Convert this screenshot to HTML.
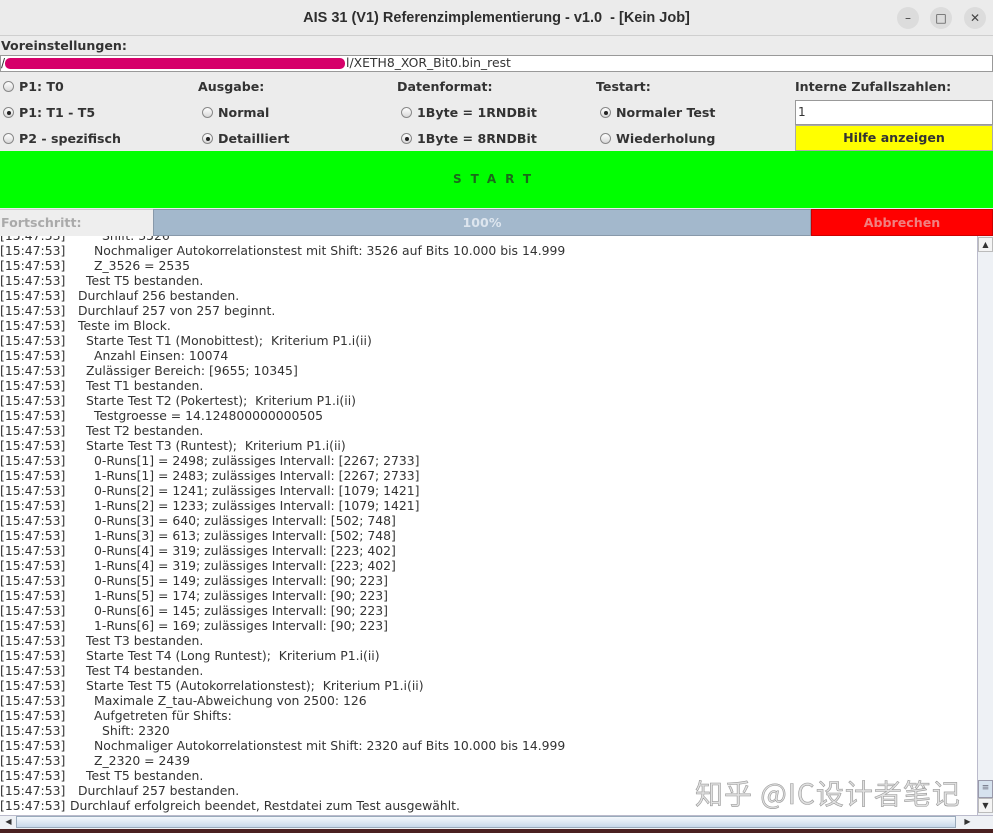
<!DOCTYPE html>
<html><head><meta charset="utf-8"><style>
*{margin:0;padding:0;box-sizing:border-box}
body{width:993px;height:833px;overflow:hidden;background:#ececec;font-family:"DejaVu Sans","Liberation Sans",sans-serif;position:relative;font-size:13px;color:#333}
.a{position:absolute}
.title{left:0;top:0;width:993px;height:36px;background:#ebebeb;border-bottom:1px solid #cfcfcf;text-align:center;line-height:36px;font-family:"Liberation Sans",sans-serif;font-weight:bold;font-size:14.5px;color:#2e2e2e}
.wb{width:22px;height:22px;border-radius:50%;background:#dcdcdc;top:7px;font-size:12px;text-align:center;line-height:22px;color:#444;font-family:"DejaVu Sans",sans-serif}
.r{display:inline-block;width:11px;height:11px;border:1px solid #888;border-radius:50%;background:linear-gradient(#fff,#d8d8d8);vertical-align:-1px;margin-right:5px;position:relative}
.r.on::after{content:"";position:absolute;left:2.5px;top:2.5px;width:4px;height:4px;border-radius:50%;background:#222}
.lbl{font-weight:bold;font-size:12.6px;color:#333;white-space:nowrap}
#log{left:0;top:236px;width:977px;height:579px;background:#fff;overflow:hidden}
#log div{position:absolute;height:15px;line-height:15px;font-size:12.4px;color:#333;white-space:pre}
</style></head><body>
<div class="a title">AIS 31 (V1) Referenzimplementierung - v1.0 &nbsp;- [Kein Job]</div>
<div class="a wb" style="left:897px">–</div>
<div class="a wb" style="left:930px">□</div>
<div class="a wb" style="left:964px">✕</div>

<div class="a lbl" style="left:1px;top:38px">Voreinstellungen:</div>
<div class="a" style="left:0;top:55px;width:993px;height:17px;background:#fff;border:1px solid #999"></div>
<div class="a" style="left:5px;top:58px;width:340px;height:11px;background:#d6006a;border-radius:5px"></div>
<div class="a" style="left:346px;top:56px;font-size:12.4px;line-height:14px;color:#333">l/XETH8_XOR_Bit0.bin_rest</div>
<div class="a" style="left:1px;top:56px;font-size:12px;line-height:14px;color:#333">/</div>

<div class="a lbl" style="left:3px;top:79px"><span class="r"></span>P1: T0</div>
<div class="a lbl" style="left:3px;top:105px"><span class="r on"></span>P1: T1 - T5</div>
<div class="a lbl" style="left:3px;top:131px"><span class="r"></span>P2 - spezifisch</div>
<div class="a lbl" style="left:198px;top:79px">Ausgabe:</div>
<div class="a lbl" style="left:202px;top:105px"><span class="r"></span>Normal</div>
<div class="a lbl" style="left:202px;top:131px"><span class="r on"></span>Detailliert</div>
<div class="a lbl" style="left:397px;top:79px">Datenformat:</div>
<div class="a lbl" style="left:401px;top:105px"><span class="r"></span>1Byte = 1RNDBit</div>
<div class="a lbl" style="left:401px;top:131px"><span class="r on"></span>1Byte = 8RNDBit</div>
<div class="a lbl" style="left:596px;top:79px">Testart:</div>
<div class="a lbl" style="left:600px;top:105px"><span class="r on"></span>Normaler Test</div>
<div class="a lbl" style="left:600px;top:131px"><span class="r"></span>Wiederholung</div>
<div class="a lbl" style="left:795px;top:79px">Interne Zufallszahlen:</div>
<div class="a" style="left:795px;top:100px;width:198px;height:25px;background:#fff;border:1px solid #999;font-size:12px;line-height:22px;padding-left:2px">1</div>
<div class="a lbl" style="left:795px;top:125px;width:198px;height:26px;background:#ffff00;border:1px solid #aaa;text-align:center;line-height:24px">Hilfe anzeigen</div>

<div class="a" style="left:0;top:151px;width:993px;height:57px;background:#00ff00;text-align:center;line-height:57px;font-weight:bold;font-size:12px;letter-spacing:9px;color:#1a6a1a">START</div>

<div class="a" style="left:0;top:209px;width:153px;height:27px;background:#eee;border-top:1px solid #ccc;font-weight:bold;color:#aaa;line-height:26px;font-size:12.6px;padding-left:1px">Fortschritt:</div>
<div class="a" style="left:153px;top:209px;width:658px;height:27px;background:#a3b8cc;border:1px solid #8899aa;text-align:center;line-height:25px;font-weight:bold;color:#dde5ee;font-size:12.6px">100%</div>
<div class="a" style="left:811px;top:209px;width:182px;height:27px;background:#ff0000;border:1px solid #c00;text-align:center;line-height:25px;font-weight:bold;color:#f08080;font-size:12.6px">Abbrechen</div>

<div class="a" id="log">
<div style="top:-8px;left:0">[15:47:53]</div><div style="top:-8px;left:102px">Shift: 3526</div>
</div>

<div class="a" style="left:977px;top:236px;width:16px;height:579px;background:#eef1f5;border-left:1px solid #bbc"></div>
<div class="a" style="left:978px;top:237px;width:15px;height:15px;background:#f4f4f4;border:1px solid #bbb;font-size:8px;text-align:center;line-height:13px">▲</div>
<div class="a" style="left:978px;top:780px;width:15px;height:18px;background:#d6e2ee;border:1px solid #99a;font-size:9px;text-align:center;line-height:15px;color:#667">≡</div>
<div class="a" style="left:978px;top:798px;width:15px;height:15px;background:#f4f4f4;border:1px solid #bbb;font-size:8px;text-align:center;line-height:13px">▼</div>
<div class="a" style="left:0;top:815px;width:993px;height:14px;background:#eef1f5;border-top:1px solid #bbc"></div>
<div class="a" style="left:1px;top:815px;width:15px;height:14px;font-size:8px;text-align:center;line-height:14px">◀</div>
<div class="a" style="left:16px;top:816px;width:940px;height:12px;background:linear-gradient(#f4f8fc,#c8d8ea);border:1px solid #9ab"></div>
<div class="a" style="left:960px;top:815px;width:15px;height:14px;font-size:8px;text-align:center;line-height:14px">▶</div>
<div class="a" style="left:0;top:829px;width:993px;height:4px;background:#4a2020"></div>
<div class="a" style="left:695px;top:773px;font-family:'Noto Sans CJK SC',sans-serif;font-size:28px;color:#e0e0e0;-webkit-text-stroke:0.6px #999;letter-spacing:1px;white-space:nowrap">知乎 @IC设计者笔记</div>

<script>
var L=[[3,"Nochmaliger Autokorrelationstest mit Shift: 3526 auf Bits 10.000 bis 14.999"],[3,"Z_3526 = 2535"],[2,"Test T5 bestanden."],[1,"Durchlauf 256 bestanden."],[1,"Durchlauf 257 von 257 beginnt."],[1,"Teste im Block."],[2,"Starte Test T1 (Monobittest);  Kriterium P1.i(ii)"],[3,"Anzahl Einsen: 10074"],[2,"Zulässiger Bereich: [9655; 10345]"],[2,"Test T1 bestanden."],[2,"Starte Test T2 (Pokertest);  Kriterium P1.i(ii)"],[3,"Testgroesse = 14.124800000000505"],[2,"Test T2 bestanden."],[2,"Starte Test T3 (Runtest);  Kriterium P1.i(ii)"],
[3,"0-Runs[1] = 2498; zulässiges Intervall: [2267; 2733]"],[3,"1-Runs[1] = 2483; zulässiges Intervall: [2267; 2733]"],[3,"0-Runs[2] = 1241; zulässiges Intervall: [1079; 1421]"],[3,"1-Runs[2] = 1233; zulässiges Intervall: [1079; 1421]"],[3,"0-Runs[3] = 640; zulässiges Intervall: [502; 748]"],[3,"1-Runs[3] = 613; zulässiges Intervall: [502; 748]"],[3,"0-Runs[4] = 319; zulässiges Intervall: [223; 402]"],[3,"1-Runs[4] = 319; zulässiges Intervall: [223; 402]"],[3,"0-Runs[5] = 149; zulässiges Intervall: [90; 223]"],[3,"1-Runs[5] = 174; zulässiges Intervall: [90; 223]"],[3,"0-Runs[6] = 145; zulässiges Intervall: [90; 223]"],[3,"1-Runs[6] = 169; zulässiges Intervall: [90; 223]"],
[2,"Test T3 bestanden."],[2,"Starte Test T4 (Long Runtest);  Kriterium P1.i(ii)"],[2,"Test T4 bestanden."],[2,"Starte Test T5 (Autokorrelationstest);  Kriterium P1.i(ii)"],[3,"Maximale Z_tau-Abweichung von 2500: 126"],[3,"Aufgetreten für Shifts:"],[4,"Shift: 2320"],[3,"Nochmaliger Autokorrelationstest mit Shift: 2320 auf Bits 10.000 bis 14.999"],[3,"Z_2320 = 2439"],[2,"Test T5 bestanden."],[1,"Durchlauf 257 bestanden."],[0,"Durchlauf erfolgreich beendet, Restdatei zum Test ausgewählt."]];
var g=document.getElementById('log'),h='';
L.forEach(function(l,i){var t=7+15*i;h+='<div style="top:'+t+'px;left:0">[15:47:53]</div><div style="top:'+t+'px;left:'+(70+8*l[0])+'px">'+l[1]+'</div>';});
g.innerHTML+=h;
</script>
</body></html>
